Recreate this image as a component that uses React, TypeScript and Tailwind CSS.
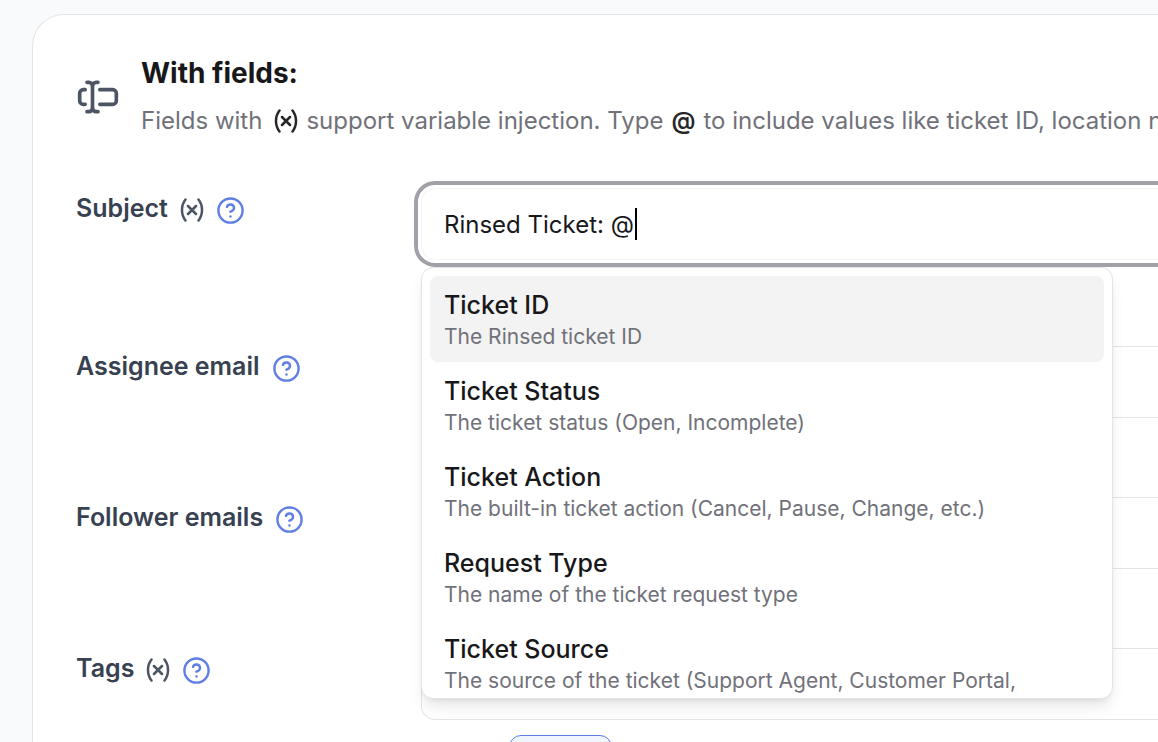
import { useState } from 'react';
import { CircleQuestionMark, TextCursorInput } from 'lucide-react';

interface VariableOption {
  name: string;
  description: string;
}

const variableOptions: VariableOption[] = [
  { name: 'Ticket ID', description: 'The Rinsed ticket ID' },
  { name: 'Ticket Status', description: 'The ticket status (Open, Incomplete)' },
  { name: 'Ticket Action', description: 'The built-in ticket action (Cancel, Pause, Change, etc.)' },
  { name: 'Request Type', description: 'The name of the ticket request type' },
  { name: 'Ticket Source', description: 'The source of the ticket (Support Agent, Customer Portal,' },
];

const VariableIcon = ({ className }: { className: string }) => (
  <svg
    viewBox="0 0 24 24"
    fill="none"
    stroke="currentColor"
    strokeWidth="2.5"
    strokeLinecap="round"
    strokeLinejoin="round"
    aria-hidden="true"
    className={`size-6 shrink-0 ${className}`}
  >
    <path d="M5.5 1.5c-4.7 6-4.7 15 0 21M18.5 1.5c4.7 6 4.7 15 0 21M8 8l8 8M16 8l-8 8" />
  </svg>
);

interface FieldLabelProps {
  id: string;
  label: string;
  injectable?: boolean;
}

const FieldLabel = ({ id, label, injectable = false }: FieldLabelProps) => (
  <div className="flex h-11 w-[345px] shrink-0 items-center text-[#374151]">
    <label htmlFor={id} className="-mt-1 text-[25px] leading-9 font-semibold">
      {label}
    </label>
    {injectable && <VariableIcon className="ml-3 text-[#4b5563]" />}
    <button type="button" aria-label={`Help for ${label}`} className="ml-3">
      <CircleQuestionMark size={29} strokeWidth={2} className="text-[#5f7fe3]" />
    </button>
  </div>
);

const inputClass =
  'block h-[72px] w-full rounded-l-[14px] border border-r-0 bg-white px-[22px] text-[24px] leading-8 text-[#18181b]';

const VariableMenu = ({ selected, onSelect }: { selected: number; onSelect: (index: number) => void }) => (
  <div
    role="listbox"
    className="absolute top-[79px] left-0 z-10 h-[432px] w-[692px] overflow-hidden rounded-xl border border-[#e4e4e7] bg-white p-2 shadow-lg"
  >
    {variableOptions.map((option, index) => (
      <button
        key={option.name}
        type="button"
        role="option"
        aria-selected={index === selected}
        onClick={() => onSelect(index)}
        className={`block w-full rounded-lg px-3.5 pt-3 pb-2.5 text-left ${index === selected ? 'bg-[#f3f3f3]' : ''}`}
      >
        <span className="block text-[25px] leading-[34px] font-medium text-[#18181b]">{option.name}</span>
        <span className="block text-[21px] leading-[30px] whitespace-nowrap text-[#71717a]">{option.description}</span>
      </button>
    ))}
  </div>
);

export default function App() {
  const [subject, setSubject] = useState('Rinsed Ticket: @');
  const [selected, setSelected] = useState(0);

  return (
    <div className="h-screen overflow-hidden bg-[#f9fafc] pt-3.5 pl-8 font-['Inter','Liberation_Sans',sans-serif]">
      <section className="min-h-screen rounded-tl-[32px] border-t border-l border-[#e4e4e7] bg-white pl-[43px]">
        <header className="flex items-start gap-[21px] pt-9">
          <TextCursorInput size={44} strokeWidth={2} className="mt-6 shrink-0 text-[#4b5563]" />
          <div className="min-w-0 overflow-hidden">
            <h2 className="text-[28px] leading-[44px] font-bold text-[#18181b]">With fields:</h2>
            <p className="flex h-[52px] items-center text-[24px] whitespace-nowrap text-[#71717a]">
              Fields with
              <VariableIcon className="mr-2 ml-3 text-[#27272a]" />
              support variable injection. Type
              <strong className="mx-2 font-semibold text-[#27272a]">@</strong>
              to include values like ticket ID, location name
            </p>
          </div>
        </header>

        <form className="mt-[41px]">
          <div className="flex">
            <FieldLabel id="subject" label="Subject" injectable />
            <div className="relative grow">
              <input
                id="subject"
                value={subject}
                onChange={(event) => setSubject(event.target.value)}
                className={`${inputClass} border-[#f4f4f5] caret-transparent outline-4 outline-offset-3 outline-[#a1a1aa]`}
              />
              <span className="absolute top-5 left-[214px] h-8 w-0.5 bg-black" />
              <VariableMenu selected={selected} onSelect={setSelected} />
            </div>
          </div>

          <div className="mt-[86px] grid gap-[79px]">
            <div className="flex">
              <FieldLabel id="assignee" label="Assignee email" />
              <input id="assignee" className={`${inputClass} border-[#e4e4e7]`} />
            </div>
            <div className="flex">
              <FieldLabel id="followers" label="Follower emails" />
              <input id="followers" className={`${inputClass} border-[#e4e4e7]`} />
            </div>
            <div className="flex">
              <FieldLabel id="tags" label="Tags" injectable />
              <div className="grow">
                <input id="tags" className={`${inputClass} border-[#e4e4e7]`} />
                <button
                  type="button"
                  aria-label="Suggested tag"
                  className="mt-[15px] ml-[88px] block h-10 w-[103px] rounded-xl border border-[#5f7fe3] bg-[#f0f5fe]"
                />
              </div>
            </div>
          </div>
        </form>
      </section>
    </div>
  );
}
